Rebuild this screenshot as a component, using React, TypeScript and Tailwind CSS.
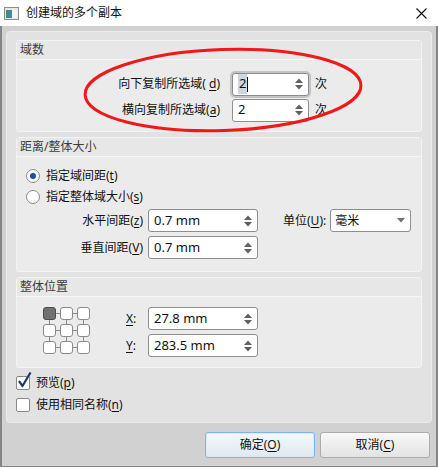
import React from 'react';

const FONT = '"Noto Sans", "Noto Sans CJK SC", sans-serif';

function Spin() {
  return (
    <svg width="10" height="14" viewBox="0 0 10 14" className="shrink-0">
      <path d="M1 6 L5 1.5 L9 6 Z" fill="#5f5f5f" />
      <path d="M1 8 L5 12.5 L9 8 Z" fill="#5f5f5f" />
    </svg>
  );
}

function SpinBox({ value, width, focused }: { value: React.ReactNode; width: string; focused?: boolean }) {
  return (
    <div
      className={`${width} h-[23px] flex items-center justify-between bg-white rounded-[3px] pl-[5px] pr-[4px] ${
        focused ? 'border border-[#8c8c8c] ring-2 ring-[#c4c4c4]' : 'border border-[#8e8e8e]'
      }`}
    >
      <span className="text-[13px] text-[#111]">{value}</span>
      <Spin />
    </div>
  );
}

function Group({ title, className, children }: { title: string; className: string; children: React.ReactNode }) {
  return (
    <div className={`flex flex-col rounded-[3px] border border-[#f3f3f3] bg-[#ebebeb] ${className}`}>
      <div className="h-[19px] flex items-center pl-[3px] text-[12px] text-[#3c3c3c] border-b border-[#f6f6f6] bg-[#e7e7e7]">
        {title}
      </div>
      {children}
    </div>
  );
}

function PositionGrid() {
  const p = [0, 17, 34];
  return (
    <svg width="47" height="47" viewBox="0 0 47 47">
      {p.map((y) =>
        [0, 1].map((i) => (
          <line key={`h${y}${i}`} x1={p[i] + 12} y1={y + 6.5} x2={p[i + 1]} y2={y + 6.5} stroke="#8a8a8a" />
        ))
      )}
      {p.map((x) =>
        [0, 1].map((i) => (
          <line key={`v${x}${i}`} x1={x + 6.5} y1={p[i] + 12} x2={x + 6.5} y2={p[i + 1]} stroke="#8a8a8a" />
        ))
      )}
      {p.map((y) =>
        p.map((x) => (
          <rect
            key={`${x}-${y}`}
            x={x + 0.5}
            y={y + 0.5}
            width="12"
            height="12"
            rx="2.5"
            fill={x === 0 && y === 0 ? '#717171' : '#ffffff'}
            stroke={x === 0 && y === 0 ? '#4a4a4a' : '#8a8a8a'}
          />
        ))
      )}
    </svg>
  );
}

export default function App() {
  return (
    <div className="relative w-[438px] h-[469px] bg-white flex flex-col text-[#111]" style={{ fontFamily: FONT }}>
      {/* Title bar */}
      <div className="h-[26px] flex items-center shrink-0 bg-white">
        <svg width="15" height="13" viewBox="0 0 15 13" className="ml-[4px]">
          <rect x="0.5" y="0.5" width="14" height="12" fill="#e8e8e8" stroke="#8d8d8d" />
          <rect x="2" y="3" width="3" height="8" fill="#3f8f7a" />
          <rect x="5" y="3" width="3" height="8" fill="#4e7fb8" />
          <rect x="8" y="3" width="5" height="8" fill="#f4f4f4" />
        </svg>
        <span className="ml-[7px] text-[12px] text-[#111]">创建域的多个副本</span>
        <svg width="11" height="11" viewBox="0 0 11 11" className="ml-auto mr-[11px]">
          <path d="M0.5 0.5 L10.5 10.5 M10.5 0.5 L0.5 10.5" stroke="#111" strokeWidth="1.1" />
        </svg>
      </div>

      {/* Body */}
      <div className="h-[441px] flex flex-col bg-[#d1d1d1] border-x-2 border-b border-[#858585] px-[4px] pt-[5px]">
        <div className="h-[392px] flex flex-col rounded-[4px] bg-[#e2e2e2] border border-[#ececec] pt-[8px] px-[9px]">
          {/* 域数 */}
          <Group title="域数" className="h-[92px]">
            <div className="flex flex-col pt-[11px] text-[12px]">
              <div className="h-[26px] flex items-center">
                <span className="w-[203px] text-right">
                  向下复制所选域( <u className="underline-offset-2">d</u>)
                </span>
                <div className="ml-[12px]">
                  <SpinBox
                    width="w-[77px]"
                    focused
                    value={
                      <span className="flex items-center">
                        <span className="bg-[#cdd6e2] px-[1px]">2</span>
                        <span className="w-px h-[15px] bg-[#111]" />
                      </span>
                    }
                  />
                </div>
                <span className="ml-[6px]">次</span>
              </div>
              <div className="h-[26px] flex items-center">
                <span className="w-[203px] text-right">
                  横向复制所选域(<u className="underline-offset-2">a</u>)
                </span>
                <div className="ml-[12px]">
                  <SpinBox width="w-[77px]" value="2" />
                </div>
                <span className="ml-[6px]">次</span>
              </div>
            </div>
          </Group>

          {/* 距离/整体大小 */}
          <Group title="距离/整体大小" className="h-[135px] mt-[5px]">
            <div className="flex flex-col pt-[8px] text-[12px]">
              <div className="h-[21px] flex items-center pl-[9px]">
                <span className="w-[14px] h-[14px] rounded-full border border-[#8a8a8a] bg-white flex items-center justify-center">
                  <span className="w-[6px] h-[6px] rounded-full bg-[#1c4f9c]" />
                </span>
                <span className="ml-[6px]">
                  指定域间距(<u className="underline-offset-2">t</u>)
                </span>
              </div>
              <div className="h-[21px] flex items-center pl-[9px]">
                <span className="w-[14px] h-[14px] rounded-full border border-[#8a8a8a] bg-white" />
                <span className="ml-[6px]">
                  指定整体域大小(<u className="underline-offset-2">s</u>)
                </span>
              </div>
              <div className="h-[27px] flex items-center">
                <span className="w-[126px] text-right">
                  水平间距(<u className="underline-offset-2">z</u>)
                </span>
                <div className="ml-[5px]">
                  <SpinBox width="w-[110px]" value="0.7 mm" />
                </div>
                <span className="ml-[25px]">
                  单位(<u className="underline-offset-2">U</u>):
                </span>
                <div className="ml-[4px] w-[81px] h-[23px] flex items-center justify-between bg-white border border-[#8e8e8e] rounded-[3px] pl-[4px] pr-[5px]">
                  <span className="text-[12px]">毫米</span>
                  <svg width="8" height="5" viewBox="0 0 8 5">
                    <path d="M0 0 L8 0 L4 4.5 Z" fill="#6f6f6f" />
                  </svg>
                </div>
              </div>
              <div className="h-[27px] flex items-center">
                <span className="w-[126px] text-right">
                  垂直间距(<u className="underline-offset-2">V</u>)
                </span>
                <div className="ml-[5px]">
                  <SpinBox width="w-[110px]" value="0.7 mm" />
                </div>
              </div>
            </div>
          </Group>

          {/* 整体位置 */}
          <Group title="整体位置" className="h-[91px] mt-[5px]">
            <div className="flex pt-[8px] text-[12px]">
              <div className="ml-[26px] mt-[2px]">
                <PositionGrid />
              </div>
              <div className="ml-[36px] flex flex-col">
                <div className="h-[27px] flex items-center">
                  <span className="w-[22px]">
                    <u className="underline-offset-2">X</u>:
                  </span>
                  <SpinBox width="w-[110px]" value="27.8 mm" />
                </div>
                <div className="h-[27px] flex items-center">
                  <span className="w-[22px]">
                    <u className="underline-offset-2">Y</u>:
                  </span>
                  <SpinBox width="w-[110px]" value="283.5 mm" />
                </div>
              </div>
            </div>
          </Group>

          {/* checkboxes */}
          <div className="flex flex-col mt-[4px] text-[12px]">
            <div className="h-[22px] flex items-center">
              <span className="relative w-[14px] h-[14px] rounded-[2px] border border-[#8a8a8a] bg-white">
                <svg width="16" height="18" viewBox="0 0 16 18" className="absolute left-[0px] top-[-6px]">
                  <path d="M2 10 L5.5 15 L13.5 1.5" fill="none" stroke="#1b3a6b" strokeWidth="2.2" strokeLinejoin="round" />
                </svg>
              </span>
              <span className="ml-[6px]">
                预览(<u className="underline-offset-2">p</u>)
              </span>
            </div>
            <div className="h-[22px] flex items-center">
              <span className="w-[14px] h-[14px] rounded-[2px] border border-[#8a8a8a] bg-white" />
              <span className="ml-[6px]">
                使用相同名称(<u className="underline-offset-2">n</u>)
              </span>
            </div>
          </div>
        </div>

        {/* Buttons */}
        <div className="flex justify-end gap-[5px] mt-[9px] mr-[2px] text-[12px]">
          <button className="w-[110px] h-[26px] rounded-[3px] border border-[#7db6ec] bg-gradient-to-b from-[#f4f8fc] to-[#dfe8f1] shadow-[inset_0_0_0_1px_#d8ebfb]">
            确定(<u className="underline-offset-2">O</u>)
          </button>
          <button className="w-[110px] h-[26px] rounded-[3px] border border-[#acacac] bg-gradient-to-b from-[#f8f8f8] to-[#e3e3e3]">
            取消(<u className="underline-offset-2">C</u>)
          </button>
        </div>
      </div>

      {/* red annotation ellipse */}
      <svg className="absolute left-0 top-0 pointer-events-none" width="438" height="469" viewBox="0 0 438 469">
        <ellipse cx="223" cy="90" rx="138" ry="40.5" fill="none" stroke="#f01818" strokeWidth="3" transform="rotate(-2 223 90)" />
      </svg>
    </div>
  );
}
